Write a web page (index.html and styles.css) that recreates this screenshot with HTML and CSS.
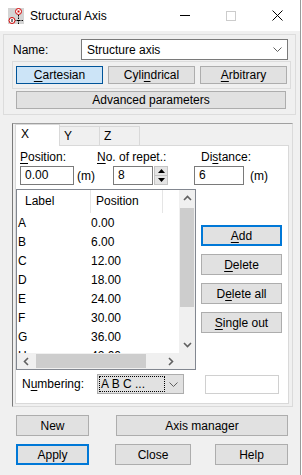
FILE: index.html
```html
<!DOCTYPE html>
<html lang="en">
<head>
  <meta charset="UTF-8">
  <title>Structural Axis</title>
  <link rel="stylesheet" href="styles.css">
</head>
<body>
  <div class="window">
    <!-- title bar -->
    <div class="titlebar">
      <svg class="app-icon" width="16" height="16" viewBox="0 0 16 16">
        <rect width="16" height="16" fill="#d4d4d4"/>
        <path d="M6 12.5H16" stroke="#000" stroke-dasharray="1.5 1"/>
        <path d="M10.5 7V16" stroke="#000" stroke-dasharray="1.5 1"/>
        <circle cx="4" cy="12.5" r="3" fill="#fff" stroke="#d00000"/>
        <rect x="3.5" y="11" width="1" height="3" fill="#000"/>
        <circle cx="10.5" cy="3.5" r="3" fill="#fff" stroke="#d00000"/>
        <rect x="9.5" y="2.5" width="2" height="2" fill="#d00000"/>
      </svg>
      <span class="title">Structural Axis</span>
      <span class="caption-btn">
        <svg width="10" height="1"><rect width="10" height="1" fill="#000"/></svg>
      </span>
      <span class="caption-btn">
        <svg width="10" height="10"><rect x=".5" y=".5" width="9" height="9" fill="none" stroke="#cccccc"/></svg>
      </span>
      <span class="caption-btn">
        <svg width="11" height="11"><path d="M.5 .5L10.5 10.5M10.5 .5L.5 10.5" stroke="#000"/></svg>
      </span>
    </div>

    <div class="content">
      <!-- name + coordinate system -->
      <div class="group">
        <div class="name-row">
          <span class="name-label">Name:</span>
          <div class="combo">
            <span>Structure axis</span>
            <svg class="chev" width="9" height="5"><path d="M.5 .5L4.5 4.5L8.5 .5" fill="none" stroke="#606060"/></svg>
          </div>
        </div>
        <div class="coord-box">
          <div class="btn coord selected"><u>C</u>artesian</div>
          <div class="btn coord">Cyli<u>n</u>drical</div>
          <div class="btn coord"><u>A</u>rbitrary</div>
        </div>
        <div class="btn advanced">Advanced parameters</div>
      </div>

      <!-- tabs -->
      <div class="tabframe">
        <div class="tabs">
          <span class="tab active">X</span>
          <span class="tab">Y</span>
          <span class="tab">Z</span>
        </div>
        <div class="tabpage">
          <div class="labels">
            <span class="lbl-pos"><u>P</u>osition:</span>
            <span class="lbl-rep"><u>N</u>o. of repet.:</span>
            <span>Di<u>s</u>tance:</span>
          </div>
          <div class="inputs">
            <div class="col-pos">
              <div class="edit w-pos">0.00</div>
              <span class="unit">(m)</span>
            </div>
            <div class="col-rep">
              <div class="edit w-rep">8</div>
              <div class="spin">
                <span class="spin-btn"><svg width="7" height="4"><path d="M3.5 0L7 4H0Z" fill="#000"/></svg></span>
                <span class="spin-btn"><svg width="7" height="4"><path d="M0 0H7L3.5 4Z" fill="#000"/></svg></span>
              </div>
            </div>
            <div class="col-dist">
              <div class="edit w-dist">6</div>
              <span class="unit unit-dist">(m)</span>
            </div>
          </div>

          <div class="middle">
            <div class="list">
              <div class="list-view">
                <div class="list-head">
                  <span class="c-label">Label</span>
                  <span class="c-pos">Position</span>
                </div>
                <div class="list-row"><span class="c-label">A</span><span class="c-pos">0.00</span></div>
                <div class="list-row"><span class="c-label">B</span><span class="c-pos">6.00</span></div>
                <div class="list-row"><span class="c-label">C</span><span class="c-pos">12.00</span></div>
                <div class="list-row"><span class="c-label">D</span><span class="c-pos">18.00</span></div>
                <div class="list-row"><span class="c-label">E</span><span class="c-pos">24.00</span></div>
                <div class="list-row"><span class="c-label">F</span><span class="c-pos">30.00</span></div>
                <div class="list-row"><span class="c-label">G</span><span class="c-pos">36.00</span></div>
                <div class="list-row"><span class="c-label">H</span><span class="c-pos">42.00</span></div>
              </div>
              <div class="vscroll">
                <span class="arrow"><svg width="9" height="6"><path d="M1 5L4.5 1.5L8 5" fill="none" stroke="#606060" stroke-width="1.6"/></svg></span>
                <span class="vthumb"></span>
                <span class="vtrack"></span>
                <span class="arrow"><svg width="9" height="6"><path d="M1 1L4.5 4.5L8 1" fill="none" stroke="#606060" stroke-width="1.6"/></svg></span>
              </div>
              <div class="hscroll">
                <span class="arrow"><svg width="6" height="9"><path d="M5 1L1.5 4.5L5 8" fill="none" stroke="#606060" stroke-width="1.6"/></svg></span>
                <span class="hthumb"></span>
                <span class="htrack"></span>
                <span class="arrow"><svg width="6" height="9"><path d="M1 1L4.5 4.5L1 8" fill="none" stroke="#606060" stroke-width="1.6"/></svg></span>
              </div>
              <div class="corner"></div>
            </div>

            <div class="side-buttons">
              <div class="btn side default"><u>A</u>dd</div>
              <div class="btn side"><u>D</u>elete</div>
              <div class="btn side">D<u>e</u>lete all</div>
              <div class="btn side"><u>S</u>ingle out</div>
            </div>
          </div>

          <div class="numbering">
            <span class="num-label">N<u>u</u>mbering:</span>
            <div class="num-combo">
              <span class="focus">A B C ...</span>
              <svg class="chev" width="9" height="5"><path d="M.5 .5L4.5 4.5L8.5 .5" fill="none" stroke="#606060"/></svg>
            </div>
            <div class="num-field"></div>
          </div>
        </div>
      </div>

      <!-- dialog buttons -->
      <div class="bottom-row">
        <div class="btn b-new">New</div>
        <div class="btn b-manager">Axis manager</div>
      </div>
      <div class="bottom-row second">
        <div class="btn b-apply default">Apply</div>
        <div class="btn b-close">Close</div>
        <div class="btn b-help">Help</div>
      </div>
    </div>
  </div>
</body>
</html>
```

FILE: styles.css
```css
* {
  box-sizing: border-box;
}
html,
body {
  margin: 0;
}
body {
  width: 302px;
  height: 475px;
  overflow: hidden;
  background: #fff;
  color: #000;
  font: 12px "Liberation Sans", Arial, sans-serif;
}
u {
  text-decoration-thickness: 1px;
  text-underline-offset: 2px;
}

.window {
  width: 301px;
  height: 475px;
  background: #f0f0f0;
  border-right: 1px solid #9a9a9a;
}

/* title bar */
.titlebar {
  height: 31px;
  background: #fff;
  display: flex;
  align-items: center;
}
.app-icon {
  margin-left: 8px;
  flex: none;
}
.title {
  margin-left: 6px;
  flex: 1;
  font-size: 12px;
}
.caption-btn {
  width: 46px;
  height: 31px;
  display: flex;
  align-items: center;
  justify-content: center;
}

/* buttons */
.btn {
  height: 18px;
  background: #e1e1e1;
  border: 1px solid #adadad;
  display: flex;
  align-items: center;
  justify-content: center;
  line-height: 14px;
}
.btn.selected {
  background: #cce4f7;
  border-color: #005499;
}
.btn.default {
  border: 2px solid #0078d7;
}

/* top group */
.group {
  margin: 3px 0 0 3px;
  width: 293px;
  border: 1px solid #dcdcdc;
  padding: 4px 4px 5px 8px;
}
.name-row {
  display: flex;
  align-items: center;
}
.name-label {
  width: 69px;
  padding-left: 1px;
}
.combo {
  width: 207px;
  height: 21px;
  background: #fff;
  border: 1px solid #7a7a7a;
  display: flex;
  align-items: center;
  justify-content: space-between;
  padding: 0 5px 0 5px;
}
.coord-box {
  margin-top: 1px;
  width: 279px;
  border: 1px solid #dcdcdc;
  padding: 4px 3px;
  display: flex;
  gap: 5px;
}
.coord {
  width: 87px;
}
.advanced {
  margin: 2px 0 0 4px;
  width: 270px;
}

/* tab control */
.tabframe {
  margin: 8px 0 0 12px;
  width: 281px;
  border: 1px solid #dadada;
  border-top-color: #a0a0a0;
  border-left-color: #7a7a7a;
  padding: 0 3px 2px 2px;
}
.tabs {
  display: flex;
  align-items: flex-end;
}
.tab {
  height: 19px;
  width: 40px;
  border: 1px solid #d9d9d9;
  border-left: none;
  border-bottom: none;
  background: #f0f0f0;
  padding: 2px 0 0 4px;
}
.tab.active {
  position: relative;
  z-index: 1;
  height: 22px;
  width: 45px;
  margin-bottom: -1px;
  border-left: 1px solid #d9d9d9;
  background: #fff;
  padding: 2px 0 0 5px;
}
.tabpage {
  width: 274px;
  height: 259px;
  background: #fff;
  border: 1px solid #d9d9d9;
}
.labels {
  padding: 4px 0 0 4px;
  display: flex;
  line-height: 15px;
}
.lbl-pos {
  width: 77px;
}
.lbl-rep {
  width: 104px;
}
.inputs {
  margin-top: 1px;
  padding-left: 4px;
  display: flex;
  height: 19px;
}
.col-pos,
.col-rep,
.col-dist {
  display: flex;
  align-items: center;
}
.col-pos {
  width: 93px;
}
.col-rep {
  width: 81px;
}
.edit {
  height: 19px;
  border: 1px solid #7a7a7a;
  background: #fff;
  padding-left: 4px;
  line-height: 17px;
}
.w-pos {
  width: 54px;
}
.w-rep {
  width: 40px;
}
.w-dist {
  width: 50px;
}
.unit {
  margin-left: 3px;
}
.unit-dist {
  margin-left: 6px;
}
.spin {
  margin-left: 1px;
  width: 14px;
  height: 19px;
  display: flex;
  flex-direction: column;
}
.spin-btn {
  flex: 1;
  background: #e5e5e5;
  border: 1px solid #c4c4c4;
  display: flex;
  align-items: center;
  justify-content: center;
}
.spin-btn + .spin-btn {
  border-top: none;
}

/* list view */
.middle {
  margin-top: 4px;
  display: flex;
}
.list {
  width: 180px;
  height: 181px;
  border: 1px solid #828790;
  display: grid;
  grid-template-columns: 162px 16px;
  grid-template-rows: 163px 16px;
}
.list-view {
  overflow: hidden;
  background: #fff;
}
.list-head {
  height: 23px;
  display: flex;
  align-items: center;
}
.list-head .c-label {
  width: 74px;
  padding-left: 8px;
  height: 23px;
  line-height: 23px;
  border-right: 1px solid #e5e5e5;
}
.list-head .c-pos {
  width: 72px;
  padding-left: 5px;
  height: 23px;
  line-height: 23px;
  border-right: 1px solid #e5e5e5;
}
.list-row {
  height: 19px;
  display: flex;
  align-items: center;
}
.list-row .c-label {
  width: 74px;
  padding-left: 1px;
}
.vscroll,
.hscroll {
  background: #f0f0f0;
  display: flex;
}
.vscroll {
  flex-direction: column;
}
.arrow {
  width: 16px;
  height: 16px;
  flex: none;
  display: flex;
  align-items: center;
  justify-content: center;
}
.hscroll .arrow {
  width: 17px;
}
.vthumb {
  margin: 2px 1px 0 1px;
  height: 99px;
  background: #cdcdcd;
}
.vtrack,
.htrack {
  flex: 1;
}
.hthumb {
  margin: 1px 0 1px 2px;
  width: 110px;
  background: #cdcdcd;
}
.corner {
  background: #f0f0f0;
}

.side-buttons {
  margin-left: 5px;
  padding-top: 36px;
  display: flex;
  flex-direction: column;
  gap: 8px;
}
.side {
  width: 81px;
  height: 21px;
}

/* numbering */
.numbering {
  margin-top: 4px;
  padding-left: 6px;
  height: 20px;
  display: flex;
  align-items: center;
}
.num-label {
  width: 75px;
}
.num-combo {
  width: 87px;
  height: 20px;
  background: #e1e1e1;
  border: 1px solid #adadad;
  display: flex;
  align-items: center;
  padding: 0 5px 0 1px;
  justify-content: space-between;
}
.focus {
  width: 66px;
  height: 16px;
  border: 1px dotted #000;
  padding-left: 1px;
  line-height: 14px;
}
.num-field {
  margin-left: 21px;
  width: 74px;
  height: 19px;
  border: 1px solid #d0d0d0;
  background: #fff;
}

/* bottom buttons */
.bottom-row {
  margin-top: 8px;
  padding-left: 16px;
  display: flex;
}
.bottom-row .btn {
  height: 21px;
}
.b-new,
.b-apply,
.b-help {
  width: 73px;
}
.b-manager {
  margin-left: 27px;
  width: 172px;
}
.b-close {
  margin-left: 26px;
  width: 76px;
}
.b-help {
  margin-left: 24px;
}
```
